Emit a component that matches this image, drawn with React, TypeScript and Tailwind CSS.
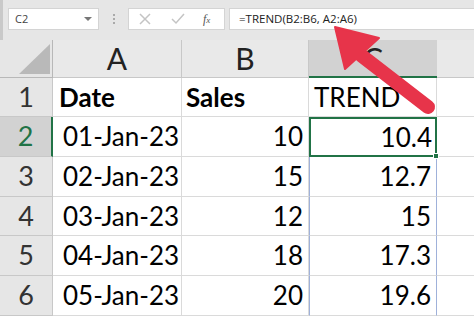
import React from "react";

const rows = [
  { n: 2, date: "01-Jan-23", sales: "10", trend: "10.4" },
  { n: 3, date: "02-Jan-23", sales: "15", trend: "12.7" },
  { n: 4, date: "03-Jan-23", sales: "12", trend: "15" },
  { n: 5, date: "04-Jan-23", sales: "18", trend: "17.3" },
  { n: 6, date: "05-Jan-23", sales: "20", trend: "19.6" },
];

const cellFont = { fontFamily: "Lato, 'Noto Sans', sans-serif" };

function Toolbar() {
  return (
    <div className="h-[40px] bg-[#e6e6e6] border-l-[3px] border-[#c9c9c9] flex items-start pt-[8px] pl-[5px]" style={{ fontFamily: "'Open Sans', 'Noto Sans', sans-serif" }}>
      <div className="w-[91px] h-[22px] bg-white border border-[#d4d4d4] flex items-center justify-between pl-[6px] pr-[6px]">
        <span className="text-[11px] text-[#444]">C2</span>
        <span className="w-0 h-0 border-l-[4px] border-r-[4px] border-t-[4px] border-l-transparent border-r-transparent border-t-[#777]" />
      </div>
      <div className="w-[29px] h-[22px] flex flex-col items-center justify-center gap-[2px]">
        <span className="w-[2px] h-[2px] bg-[#aaa]" />
        <span className="w-[2px] h-[2px] bg-[#aaa]" />
        <span className="w-[2px] h-[2px] bg-[#aaa]" />
      </div>
      <div className="w-[97px] h-[22px] bg-white border border-[#d4d4d4] flex items-center">
        <svg width="32" height="20" viewBox="0 0 32 20">
          <path d="M11 5 L21 15 M21 5 L11 15" stroke="#c4c4c4" strokeWidth="1.5" />
        </svg>
        <svg width="34" height="20" viewBox="0 0 34 20">
          <path d="M11 10 L15 14 L23 5" stroke="#c4c4c4" strokeWidth="1.5" fill="none" />
        </svg>
        <span className="ml-[8px] text-[12px] italic text-[#555]" style={{ fontFamily: "'Liberation Serif', serif" }}>
          f<span className="text-[9px]">x</span>
        </span>
      </div>
      <div className="ml-[4px] flex-1 h-[22px] bg-white border border-[#d4d4d4] border-r-0 flex items-center pl-[9px]">
        <span className="text-[11.5px] text-[#222]">=TREND(B2:B6, A2:A6)</span>
      </div>
    </div>
  );
}

function Corner() {
  return (
    <div className="h-[38px] bg-[#e6e6e6] border-r border-b border-[#b8b8b8] relative flex items-end justify-end pr-[2px] pb-[3px]">
      <div className="w-0 h-0 border-b-[30px] border-l-[31px] border-b-[#b9b9b9] border-l-transparent" />
    </div>
  );
}

export default function App() {
  return (
    <div className="w-[474px] h-[316px] overflow-hidden relative bg-white">
      <Toolbar />
      <div className="grid grid-cols-[53px_129px_127px_128px_37px] grid-rows-[38px_39px_40px_40px_39px_40px_40px]" style={cellFont}>
        <Corner />
        <div className="bg-[#e9e9e9] border-r border-b border-[#c8c8c8] flex items-center justify-center text-[30px] text-[#222]">A</div>
        <div className="bg-[#e9e9e9] border-r border-b border-[#c8c8c8] flex items-center justify-center text-[30px] text-[#222]">B</div>
        <div className="bg-[#d2d2d2] border-b-2 border-[#217346] flex items-center justify-center text-[30px] text-[#222]">C</div>
        <div className="bg-[#e9e9e9] border-b border-[#c8c8c8]" />

        <div className="bg-[#e6e6e6] border-r border-b border-[#c8c8c8] flex items-center justify-center text-[27px] text-[#333]">1</div>
        <div className="border-r border-b border-[#dadada] flex items-center pl-[6px] text-[26px] font-bold text-black">Date</div>
        <div className="border-r border-b border-[#dadada] flex items-center pl-[4px] text-[26px] font-bold text-black">Sales</div>
        <div className="border-r border-b border-[#dadada] flex items-center pl-[5px] text-[26px] text-black">TREND</div>
        <div className="border-b border-[#dadada]" />

        {rows.map((r) => {
          const active = r.n === 2;
          return (
            <React.Fragment key={r.n}>
              <div
                className={
                  active
                    ? "bg-[#d2d2d2] border-r-2 border-r-[#217346] border-b border-b-[#c8c8c8] flex items-center justify-center text-[27px] text-[#217346]"
                    : "bg-[#e6e6e6] border-r border-b border-[#c8c8c8] flex items-center justify-center text-[27px] text-[#333]"
                }
              >
                {r.n}
              </div>
              <div className="border-r border-b border-[#dadada] flex items-center pl-[10px] text-[26px] text-black">{r.date}</div>
              <div className="border-r border-b border-[#dadada] flex items-center justify-end pr-[5px] text-[26px] text-black">{r.sales}</div>
              {active ? (
                <div className="relative border-2 border-[#217346] flex items-center justify-end pr-[3px] text-[26px] text-black">
                  {r.trend}
                  <span className="absolute right-[-4px] bottom-[-4px] w-[6px] h-[6px] bg-[#217346] border border-white" />
                </div>
              ) : (
                <div className="border-l border-r border-[#9fb1da] border-b border-b-[#dadada] flex items-center justify-end pr-[5px] text-[26px] text-black">
                  {r.trend}
                </div>
              )}
              <div className="border-b border-[#dadada]" />
            </React.Fragment>
          );
        })}
      </div>
      <svg className="absolute left-0 top-0 pointer-events-none" width="474" height="316" viewBox="0 0 474 316">
        <path d="M428 107 L362 56" stroke="#e7344a" strokeWidth="14" strokeLinecap="round" />
        <path d="M335 27 L379 38 L345 69 Z" fill="#e7344a" stroke="#e7344a" strokeWidth="2" strokeLinejoin="round" />
      </svg>
    </div>
  );
}
